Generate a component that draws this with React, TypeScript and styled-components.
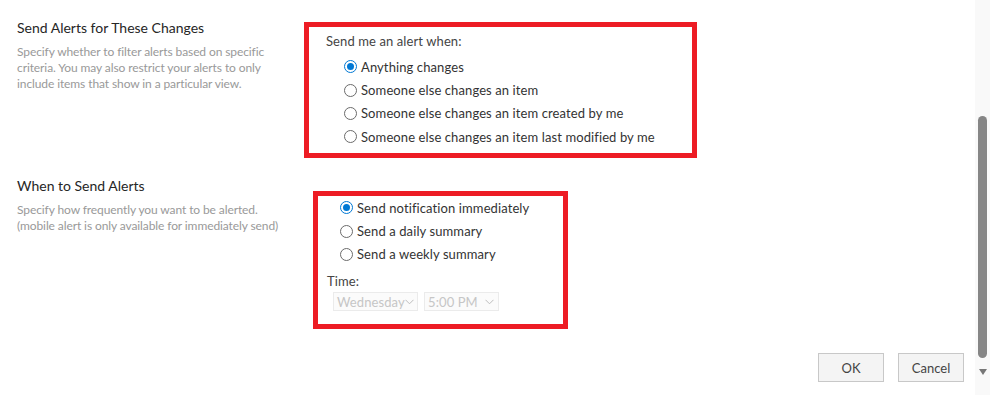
import React from "react";
import styled, { createGlobalStyle } from "styled-components";

const GlobalStyle = createGlobalStyle`
  html, body {
    margin: 0;
    padding: 0;
    background: #ffffff;
  }
  body {
    font-family: Lato, "Open Sans", sans-serif;
    color: #333333;
  }
`;

const Page = styled.div`
  display: flex;
  width: 1004px;
  height: 395px;
  overflow: hidden;
`;

const Content = styled.div`
  flex: 1;
  display: flex;
  flex-direction: column;
`;

const Section = styled.div<any>`
  display: grid;
  grid-template-columns: ${(props) => props.labelWidth};
  margin-top: ${(props) => props.top};
`;

const Label = styled.div<any>`
  padding-left: 17px;
  padding-top: ${(props) => props.top};
`;

const Title = styled.div`
  font-size: 14px;
  line-height: 20px;
  color: #262626;
`;

const Description = styled.div<any>`
  margin-top: ${(props) => props.gap};
  font-size: 12px;
  line-height: 16px;
  color: #999999;
  letter-spacing: -0.1px;
`;

const Highlight = styled.div<any>`
  box-sizing: border-box;
  width: ${(props) => props.width};
  height: ${(props) => props.height};
  margin-top: ${(props) => props.top};
  border: 5px solid #ed1c24;
  padding: ${(props) => props.pad};
`;

const FieldLabel = styled.div`
  font-size: 13px;
  line-height: 18px;
  color: #444444;
  letter-spacing: 0.1px;
`;

const RadioList = styled.div<any>`
  display: flex;
  flex-direction: column;
  padding-left: ${(props) => props.indent};
  margin-top: ${(props) => props.top};
`;

const RadioRow = styled.label`
  display: flex;
  align-items: center;
  height: 23.4px;
  gap: 4px;
  font-size: 13px;
  letter-spacing: 0.1px;
  color: #333333;
`;

const RadioDot = styled.span<any>`
  box-sizing: border-box;
  width: 13px;
  height: 13px;
  border-radius: 50%;
  border: 1px solid ${(props) => (props.checked ? "#0078d4" : "#6b6b6b")};
  display: flex;
  align-items: center;
  justify-content: center;
  flex-shrink: 0;

  &::after {
    content: "";
    width: 7px;
    height: 7px;
    border-radius: 50%;
    background: ${(props) => (props.checked ? "#0078d4" : "transparent")};
  }
`;

const TimeLabel = styled(FieldLabel)`
  margin-top: 6px;
  padding-left: 9px;
`;

const SelectRow = styled.div`
  display: flex;
  gap: 6px;
  padding-left: 15px;
  margin-top: 2px;
`;

const FakeSelect = styled.div<any>`
  box-sizing: border-box;
  width: ${(props) => props.width};
  height: 19px;
  border: 1px solid #ebebeb;
  background: #fbfbfb;
  display: flex;
  align-items: center;
  justify-content: space-between;
  padding: 0 4px 0 3px;
  font-size: 13px;
  letter-spacing: 0.1px;
  color: #c6c6c6;

  svg {
    flex-shrink: 0;
  }
`;

const Footer = styled.div`
  margin-top: auto;
  display: flex;
  justify-content: flex-end;
  gap: 14px;
  padding: 0 11px 13px 0;
`;

const Button = styled.button`
  box-sizing: border-box;
  width: 66px;
  height: 29px;
  border: 1px solid #c8c8c8;
  background: #f4f4f4;
  font-family: Lato, "Open Sans", sans-serif;
  font-size: 13px;
  color: #444444;
  padding: 0;
`;

const Scrollbar = styled.div`
  width: 15px;
  margin-right: 14px;
  background: #f9f9f9;
  display: flex;
  flex-direction: column;
  align-items: center;
  padding-top: 116px;
`;

const Thumb = styled.div`
  width: 9px;
  height: 242px;
  border-radius: 5px;
  background: #868686;
`;

const Arrow = styled.div`
  margin-top: 11px;
  width: 0;
  height: 0;
  border-left: 4.5px solid transparent;
  border-right: 4.5px solid transparent;
  border-top: 6px solid #777777;
`;

function Chevron() {
  return (
    <svg width="9" height="6" viewBox="0 0 9 6">
      <path d="M0.5 0.8 L4.5 4.8 L8.5 0.8" fill="none" stroke="#bdbdbd" strokeWidth="1" />
    </svg>
  );
}

function Radio(props: { label: string; checked?: boolean }) {
  return (
    <RadioRow>
      <RadioDot checked={props.checked} />
      {props.label}
    </RadioRow>
  );
}

const alertOptions = [
  "Anything changes",
  "Someone else changes an item",
  "Someone else changes an item created by me",
  "Someone else changes an item last modified by me",
];

const sendOptions = [
  "Send notification immediately",
  "Send a daily summary",
  "Send a weekly summary",
];

export default function App() {
  return (
    <Page>
      <GlobalStyle />
      <Content>
        <Section labelWidth="304px 1fr" top="0px">
          <Label top="18px">
            <Title>Send Alerts for These Changes</Title>
            <Description gap="6px">
              Specify whether to filter alerts based on specific
              <br />
              criteria. You may also restrict your alerts to only
              <br />
              include items that show in a particular view.
            </Description>
          </Label>
          <Highlight width="393px" height="136px" top="22px" pad="5px 0 0 17px">
            <FieldLabel>Send me an alert when:</FieldLabel>
            <RadioList indent="18px" top="5px">
              {alertOptions.map((o, i) => (
                <Radio key={o} label={o} checked={i === 0} />
              ))}
            </RadioList>
          </Highlight>
        </Section>

        <Section labelWidth="313px 1fr" top="15px">
          <Label top="3px">
            <Title>When to Send Alerts</Title>
            <Description gap="6px">
              Specify how frequently you want to be alerted.
              <br />
              (mobile alert is only available for immediately send)
            </Description>
          </Label>
          <Highlight width="255px" height="138px" top="18px" pad="0 0 0 0">
            <RadioList indent="22px" top="0px">
              {sendOptions.map((o, i) => (
                <Radio key={o} label={o} checked={i === 0} />
              ))}
            </RadioList>
            <TimeLabel>Time:</TimeLabel>
            <SelectRow>
              <FakeSelect width="85px">
                Wednesday
                <Chevron />
              </FakeSelect>
              <FakeSelect width="75px">
                5:00 PM
                <Chevron />
              </FakeSelect>
            </SelectRow>
          </Highlight>
        </Section>

        <Footer>
          <Button>OK</Button>
          <Button>Cancel</Button>
        </Footer>
      </Content>
      <Scrollbar>
        <Thumb />
        <Arrow />
      </Scrollbar>
    </Page>
  );
}
